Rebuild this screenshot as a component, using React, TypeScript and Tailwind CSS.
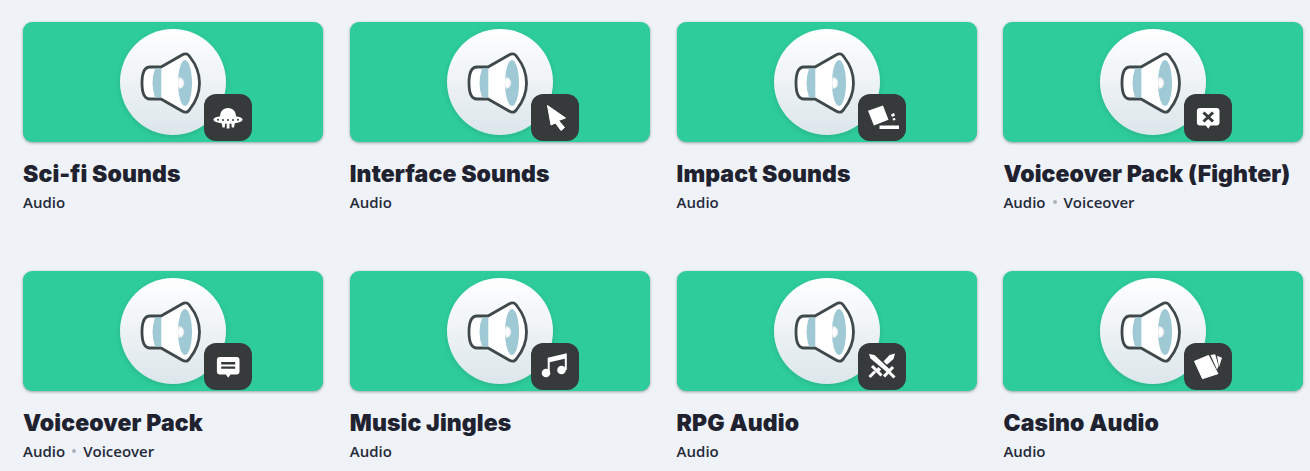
import type { ReactNode } from "react";

const BADGE_BG = "#363a3b";

const icons: Record<string, ReactNode> = {
  ufo: (
    <>
      <path d="M15.500 23c0-5.500 3-9 8-9s8 3.500 8 9z" fill="#fff" />
      <ellipse cx="23.500" cy="25.700" rx="14.500" ry="4" fill="#fff" />
      <path d="M17 28.500l1 5h2.200l.5-4.500zM22.200 29v5.500h2.800V29zM26.800 29l.5 4.500h2.200l1-5z" fill="#fff" />
      <circle cx="13.500" cy="25.700" r="1" fill={BADGE_BG} />
      <circle cx="18.500" cy="26" r="1" fill={BADGE_BG} />
      <circle cx="23.500" cy="26" r="1" fill={BADGE_BG} />
      <circle cx="28.500" cy="26" r="1" fill={BADGE_BG} />
      <circle cx="33.500" cy="25.700" r="1" fill={BADGE_BG} />
    </>
  ),
  cursor: <path d="M16 11.500L34 24l-7 2.500 6 7-3.500 3-5.500-7.500-4.500 2z" fill="#fff" stroke="#fff" strokeWidth="1" strokeLinejoin="round" />,
  impact: (
    <>
      <path d="M9.500 16.700l15-5.300L30 25.700l-14.600 5.700z" fill="#fff" />
      <path d="M21 31.500h19.500V35H21z" fill="#fff" />
      <path d="M32.500 20.500l3-1.500 1 2.500-3 1.500zM34 24.500l2.500-.5.500 2-2.500.5z" fill="#fff" />
    </>
  ),
  cross: (
    <>
      <path d="M15.500 14h16.500a3 3 0 0 1 3 3v11.500a3 3 0 0 1-3 3h-6l-2.300 3.300-2.300-3.300h-6a3 3 0 0 1-3-3V17a3 3 0 0 1 3-3z" fill="#fff" />
      <path d="M19 18.500l9.500 9M28.500 18.500l-9.500 9" stroke={BADGE_BG} strokeWidth="3" />
    </>
  ),
  chat: (
    <>
      <path d="M15.500 14h16.500a3 3 0 0 1 3 3v11.500a3 3 0 0 1-3 3h-6l-2.300 3.300-2.300-3.300h-6a3 3 0 0 1-3-3V17a3 3 0 0 1 3-3z" fill="#fff" />
      <path d="M16.700 19h14v2.400h-14zM16.700 23.400h14v2.400h-14z" fill={BADGE_BG} />
    </>
  ),
  music: (
    <>
      <circle cx="14.500" cy="30" r="4.300" fill="#fff" />
      <circle cx="30" cy="27" r="4.300" fill="#fff" />
      <path d="M17.200 30V15.500L34.300 11.500v15.500" fill="none" stroke="#fff" strokeWidth="2" />
      <path d="M17 15.500L34.300 11.500v4L17 19.500z" fill="#fff" />
    </>
  ),
  swords: (
    <>
      <path d="M36.500 10.500l-5.500 1.500L17 27l2.500 2.500 15.500-13.500z" fill="#fff" />
      <path d="M13.500 23l9.500 9.500" stroke="#fff" strokeWidth="3" />
      <path d="M11 34l5.500-5.500" stroke="#fff" strokeWidth="3" />
      <path d="M13 12L32 30.500" stroke={BADGE_BG} strokeWidth="7.500" />
      <path d="M10.500 11l5.500 1 16.500 15.500-2.500 3-18-15z" fill="#fff" />
      <path d="M25.500 33.500l9-9.500" stroke="#fff" strokeWidth="3" />
      <path d="M31 29.500l5 5" stroke="#fff" strokeWidth="3" />
    </>
  ),
  cards: (
    <>
      <path d="M32.500 12.700l5 2-3 9.300z" fill="#fff" />
      <path d="M26 12l4.700-.8 3.300 11.800-1.500 3.500z" fill="#fff" />
      <path d="M10 18.300L24 12.400l9.400 18.300L18 35.700z" fill="#fff" stroke="#fff" strokeWidth="1" strokeLinejoin="round" />
    </>
  ),
};

const items = [
  { title: "Sci-fi Sounds", icon: "ufo", tags: ["Audio"] },
  { title: "Interface Sounds", icon: "cursor", tags: ["Audio"] },
  { title: "Impact Sounds", icon: "impact", tags: ["Audio"] },
  { title: "Voiceover Pack (Fighter)", icon: "cross", tags: ["Audio", "Voiceover"] },
  { title: "Voiceover Pack", icon: "chat", tags: ["Audio", "Voiceover"] },
  { title: "Music Jingles", icon: "music", tags: ["Audio"] },
  { title: "RPG Audio", icon: "swords", tags: ["Audio"] },
  { title: "Casino Audio", icon: "cards", tags: ["Audio"] },
];

function Speaker() {
  return (
    <svg viewBox="0 0 106 106" className="h-full w-full">
      <defs>
        <radialGradient id="cone" cx="0.4" cy="0.5" r="0.6">
          <stop offset="0.4" stopColor="#ffffff" />
          <stop offset="1" stopColor="#dcdedf" />
        </radialGradient>
      </defs>
      <path
        d="M30 38h11l21-12q5-3 8 2 9.500 12 9.500 26t-9.500 26q-3 5-8 2L41 70H30q-8 0-8-16t8-16z"
        fill="#fff"
        stroke="#3f494b"
        strokeWidth="2.800"
        strokeLinejoin="round"
      />
      <path d="M35 39.400h6.300v29.200H35q-2.500-7.500-2.500-14.600T35 39.400z" fill="#a0c9d6" />
      <ellipse cx="65" cy="54" rx="7" ry="23" fill="#a0c9d6" />
      <path d="M58.300 48a6 6 0 0 1 0 12q-.6-6 0-12z" fill="url(#cone)" />
    </svg>
  );
}

function Card({ title, icon, tags }: { title: string; icon: string; tags: string[] }) {
  return (
    <div className="h-[249px]">
      <div className="relative flex h-[120px] items-center justify-center rounded-[9px] bg-[#2ecc9a] shadow-[0_1px_3px_rgba(40,60,60,0.45)]">
        <div className="relative h-[106px] w-[106px] rounded-full bg-gradient-to-b from-white to-[#dce6ea] shadow-[0_2px_5px_rgba(30,120,90,0.25)]">
          <Speaker />
          <div className="absolute left-[84px] top-[65px] h-[47px] w-[48px] rounded-[12px] bg-[#363a3b]">
            <svg viewBox="0 0 47 47" className="h-full w-full">
              {icons[icon]}
            </svg>
          </div>
        </div>
      </div>
      <h3 className="mt-[15px] whitespace-nowrap font-['Inter',sans-serif] text-[23px] leading-[34px] font-black tracking-[0.1px] text-[#20222f]">
        {title}
      </h3>
      <div className="-mt-[1px] flex items-center font-['Open_Sans',sans-serif] text-[15px] leading-[24px] font-semibold text-[#262a38]">
        {tags.map((tag, i) => (
          <span key={tag} className="flex items-center">
            {i > 0 && <span className="mx-[7px] h-[4px] w-[4px] rounded-full bg-[#a9b3bd]" />}
            {tag}
          </span>
        ))}
      </div>
    </div>
  );
}

export default function App() {
  return (
    <div className="h-[471px] w-[1310px] overflow-hidden bg-[#eff3f8] pt-[22px] pl-[23px]">
      <div className="grid grid-cols-[repeat(4,300px)] gap-x-[26.800px]">
        {items.map((item) => (
          <Card key={item.title} {...item} />
        ))}
      </div>
    </div>
  );
}
